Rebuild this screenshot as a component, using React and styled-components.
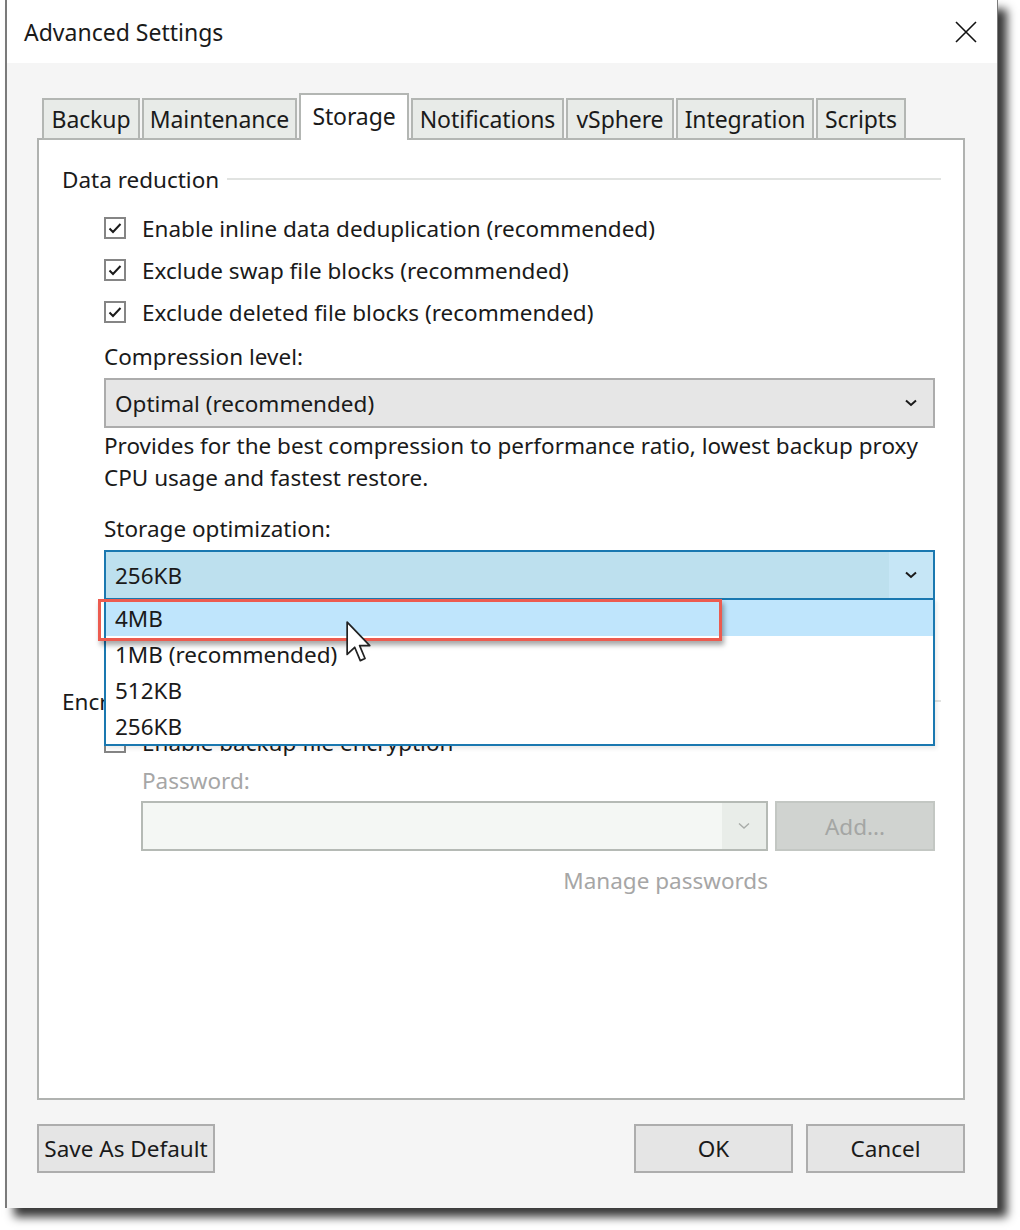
import React from 'react';
import styled, { createGlobalStyle } from 'styled-components';

const GlobalStyle = createGlobalStyle`
  html, body {
    margin: 0;
    padding: 0;
    background: #ffffff;
  }
  body {
    font-family: 'Noto Sans', 'Open Sans', sans-serif;
    color: #1a1a1a;
  }
`;

const Stage = styled.div`
  width: 1020px;
  height: 1230px;
  padding-left: 5px;
  box-sizing: border-box;
  overflow: hidden;
`;

const Window = styled.div`
  width: 993px;
  height: 1208px;
  box-sizing: border-box;
  border-left: 2px solid #7a7a7a;
  border-right: 1px solid #7a7a7a;
  display: flex;
  flex-direction: column;
  background: #f5f5f5;
  box-shadow: 9px 9px 9px rgba(0, 0, 0, 0.78);
`;

const TitleBar = styled.div`
  height: 63px;
  flex: none;
  background: #ffffff;
  display: flex;
  align-items: center;
  justify-content: space-between;
  padding: 0 20px 0 17px;
  font-size: 23px;
`;

const CloseBtn = styled.div`
  width: 22px;
  height: 22px;
  display: flex;
  align-items: center;
  justify-content: center;
`;

const Body = styled.div`
  flex: 1;
  display: flex;
  flex-direction: column;
  padding: 30px 32px 0 30px;
`;

const TabRow = styled.div`
  display: flex;
  align-items: flex-end;
  padding-left: 5px;
  margin-bottom: -2px;
  position: relative;
  z-index: 1;
`;

const Tab = styled.div`
  box-sizing: border-box;
  height: ${(p) => (p.$active ? '47px' : '42px')};
  width: ${(p) => p.$w}px;
  margin-right: 2px;
  border: 2px solid #b3b6b3;
  border-bottom: ${(p) => (p.$active ? 'none' : '2px solid #b3b6b3')};
  background: ${(p) => (p.$active ? '#ffffff' : '#e8ebe8')};
  display: flex;
  align-items: center;
  justify-content: center;
  padding-bottom: ${(p) => (p.$active ? '4px' : '0')};
  font-size: 23px;
  letter-spacing: -0.1px;
  white-space: nowrap;
`;

const Panel = styled.div`
  height: 962px;
  box-sizing: border-box;
  background: #ffffff;
  border: 2px solid #b0b2b0;
  padding: 23px 22px 0 23px;
  display: flex;
  flex-direction: column;
`;

const GroupHeader = styled.div`
  display: flex;
  align-items: center;
  height: 32px;
  margin-top: ${(p) => p.$mt || 0}px;
  font-size: 22.5px;
  white-space: nowrap;

  &::after {
    content: '';
    flex: 1;
    height: 2px;
    margin-left: 8px;
    background: #e1e3e1;
  }
`;

const Indent = styled.div`
  padding-left: ${(p) => p.$pl ?? 42}px;
  padding-right: ${(p) => p.$pr || 0}px;
  display: flex;
  flex-direction: column;
`;

const CheckRow = styled.div`
  height: 42px;
  display: flex;
  align-items: center;
  gap: 16px;
  font-size: 22.5px;
  white-space: nowrap;
`;

const Box = styled.div`
  width: 22px;
  height: 22px;
  box-sizing: border-box;
  border: 2px solid #858585;
  background: #ffffff;
  display: flex;
  align-items: center;
  justify-content: center;
  flex: none;
`;

const Label = styled.div`
  height: 32px;
  line-height: 32px;
  margin-top: ${(p) => p.$mt || 0}px;
  font-size: 22.5px;
  color: ${(p) => (p.$disabled ? '#a6a6a6' : '#1a1a1a')};
  text-align: ${(p) => (p.$right ? 'right' : 'left')};
  white-space: nowrap;
`;

const SelectWrap = styled.div`
  position: relative;
  margin-top: ${(p) => p.$mt || 0}px;
`;

const Select = styled.div`
  height: 50px;
  box-sizing: border-box;
  border: 2px solid ${(p) => (p.$open ? '#1a78b0' : '#acacac')};
  background: ${(p) => (p.$open ? '#bde0ee' : '#e6e6e6')};
  display: flex;
  align-items: stretch;
  font-size: 22.5px;
`;

const SelectValue = styled.div`
  flex: 1;
  display: flex;
  align-items: center;
  padding-left: 9px;
`;

const Chevron = styled.div`
  width: 44px;
  display: flex;
  align-items: center;
  justify-content: center;
  background: ${(p) => p.$bg || 'transparent'};
`;

const Description = styled.div`
  margin-top: 2px;
  font-size: 22.5px;
  line-height: 32px;
  white-space: nowrap;
`;

const DropList = styled.div`
  position: absolute;
  left: 0;
  right: 0;
  top: 48px;
  box-sizing: border-box;
  border: 2px solid #1a78b0;
  background: #ffffff;
  z-index: 5;
  box-shadow: 2px 3px 4px rgba(0, 0, 0, 0.08);
`;

const DropItem = styled.div`
  height: 36px;
  display: flex;
  align-items: center;
  padding-left: 9px;
  font-size: 22.5px;
  background: ${(p) => (p.$hot ? '#bfe5fc' : 'transparent')};
`;

const Callout = styled.div`
  position: absolute;
  left: -8px;
  top: -1px;
  width: 624px;
  height: 42px;
  box-sizing: border-box;
  border: 3px solid #ec5b4f;
  box-shadow: 2px 4px 5px rgba(0, 0, 0, 0.35);
  pointer-events: none;
`;

const Cursor = styled.svg`
  position: absolute;
  left: 240px;
  top: 21px;
`;

const PasswordRow = styled.div`
  display: flex;
  gap: 7px;
  margin-top: 4px;
`;

const PwSelect = styled.div`
  width: 627px;
  height: 50px;
  box-sizing: border-box;
  border: 2px solid #b5bab5;
  background: #f4f7f4;
  display: flex;
  justify-content: flex-end;
`;

const AddButton = styled.div`
  flex: 1;
  height: 50px;
  box-sizing: border-box;
  border: 2px solid #c3c7c3;
  background: #d0d3d0;
  color: #a4a6a4;
  font-size: 22.5px;
  display: flex;
  align-items: center;
  justify-content: center;
`;

const ManageRow = styled.div`
  width: 627px;
  margin-top: 14px;
`;

const Footer = styled.div`
  display: flex;
  align-items: center;
  margin-top: 24px;
  gap: 13px;
`;

const Button = styled.div`
  width: ${(p) => p.$w}px;
  height: 49px;
  box-sizing: border-box;
  border: 2px solid #adadad;
  background: #e5e5e5;
  display: flex;
  align-items: center;
  justify-content: center;
  font-size: 22.5px;
  white-space: nowrap;
  margin-right: ${(p) => (p.$push ? 'auto' : '0')};
`;

const tabs = [
  ['Backup', 98],
  ['Maintenance', 155],
  ['Storage', 110],
  ['Notifications', 153],
  ['vSphere', 108],
  ['Integration', 138],
  ['Scripts', 90],
];

const dedupe = [
  'Enable inline data deduplication (recommended)',
  'Exclude swap file blocks (recommended)',
  'Exclude deleted file blocks (recommended)',
];

const blockSizes = ['4MB', '1MB (recommended)', '512KB', '256KB'];

function Check() {
  return (
    <svg width="14" height="12" viewBox="0 0 14 12">
      <polyline points="1.5,6.5 5,10 12.5,2" fill="none" stroke="#1a1a1a" strokeWidth="2" />
    </svg>
  );
}

function Caret({ color = '#1a1a1a', w = 2 }) {
  return (
    <svg width="12" height="8" viewBox="0 0 12 8">
      <polyline points="1,1.5 6,6 11,1.5" fill="none" stroke={color} strokeWidth={w} />
    </svg>
  );
}

export default function App() {
  return (
    <Stage>
      <GlobalStyle />
      <Window>
        <TitleBar>
          <span>Advanced Settings</span>
          <CloseBtn>
            <svg width="22" height="22" viewBox="0 0 22 22">
              <path d="M1 1 L21 21 M21 1 L1 21" stroke="#111" strokeWidth="1.6" />
            </svg>
          </CloseBtn>
        </TitleBar>
        <Body>
          <TabRow>
            {tabs.map(([name, w]) => (
              <Tab key={name} $w={w} $active={name === 'Storage'}>
                {name}
              </Tab>
            ))}
          </TabRow>
          <Panel>
            <GroupHeader>Data reduction</GroupHeader>
            <Indent $pr={6} style={{ marginTop: 12 }}>
              {dedupe.map((t) => (
                <CheckRow key={t}>
                  <Box>
                    <Check />
                  </Box>
                  {t}
                </CheckRow>
              ))}
              <Label $mt={8}>Compression level:</Label>
              <SelectWrap $mt={5}>
                <Select>
                  <SelectValue>Optimal (recommended)</SelectValue>
                  <Chevron>
                    <Caret />
                  </Chevron>
                </Select>
              </SelectWrap>
              <Description>
                Provides for the best compression to performance ratio, lowest backup proxy
                <br />
                CPU usage and fastest restore.
              </Description>
              <Label $mt={19}>Storage optimization:</Label>
              <SelectWrap $mt={5}>
                <Select $open>
                  <SelectValue>256KB</SelectValue>
                  <Chevron $bg="#c6e6f6">
                    <Caret />
                  </Chevron>
                </Select>
                <DropList>
                  {blockSizes.map((s, i) => (
                    <DropItem key={s} $hot={i === 0}>
                      {s}
                    </DropItem>
                  ))}
                  <Callout />
                  <Cursor width="26" height="42" viewBox="0 0 12 19.5">
                    <path
                      d="M0.5 0.5 L0.5 15.5 L4 12.2 L6.6 18.4 L8.8 17.4 L6.3 11.4 L11 11.4 Z"
                      fill="#ffffff"
                      stroke="#222"
                      strokeWidth="0.8"
                      strokeLinejoin="round"
                    />
                  </Cursor>
                </DropList>
              </SelectWrap>
            </Indent>
            <GroupHeader $mt={85}>Encryption</GroupHeader>
            <Indent $pr={6}>
              <CheckRow style={{ marginTop: 4 }}>
                <Box />
                Enable backup file encryption
              </CheckRow>
              <Indent $pl={37}>
                <Label $disabled $mt={2} style={{ paddingLeft: 1 }}>
                  Password:
                </Label>
                <PasswordRow>
                  <PwSelect>
                    <Chevron $bg="#e9ede9">
                      <Caret color="#a8aca8" w={1.4} />
                    </Chevron>
                  </PwSelect>
                  <AddButton>Add...</AddButton>
                </PasswordRow>
                <ManageRow>
                  <Label $disabled $right>
                    Manage passwords
                  </Label>
                </ManageRow>
              </Indent>
            </Indent>
          </Panel>
          <Footer>
            <Button $w={178} $push>
              Save As Default
            </Button>
            <Button $w={159}>OK</Button>
            <Button $w={159}>Cancel</Button>
          </Footer>
        </Body>
      </Window>
    </Stage>
  );
}
